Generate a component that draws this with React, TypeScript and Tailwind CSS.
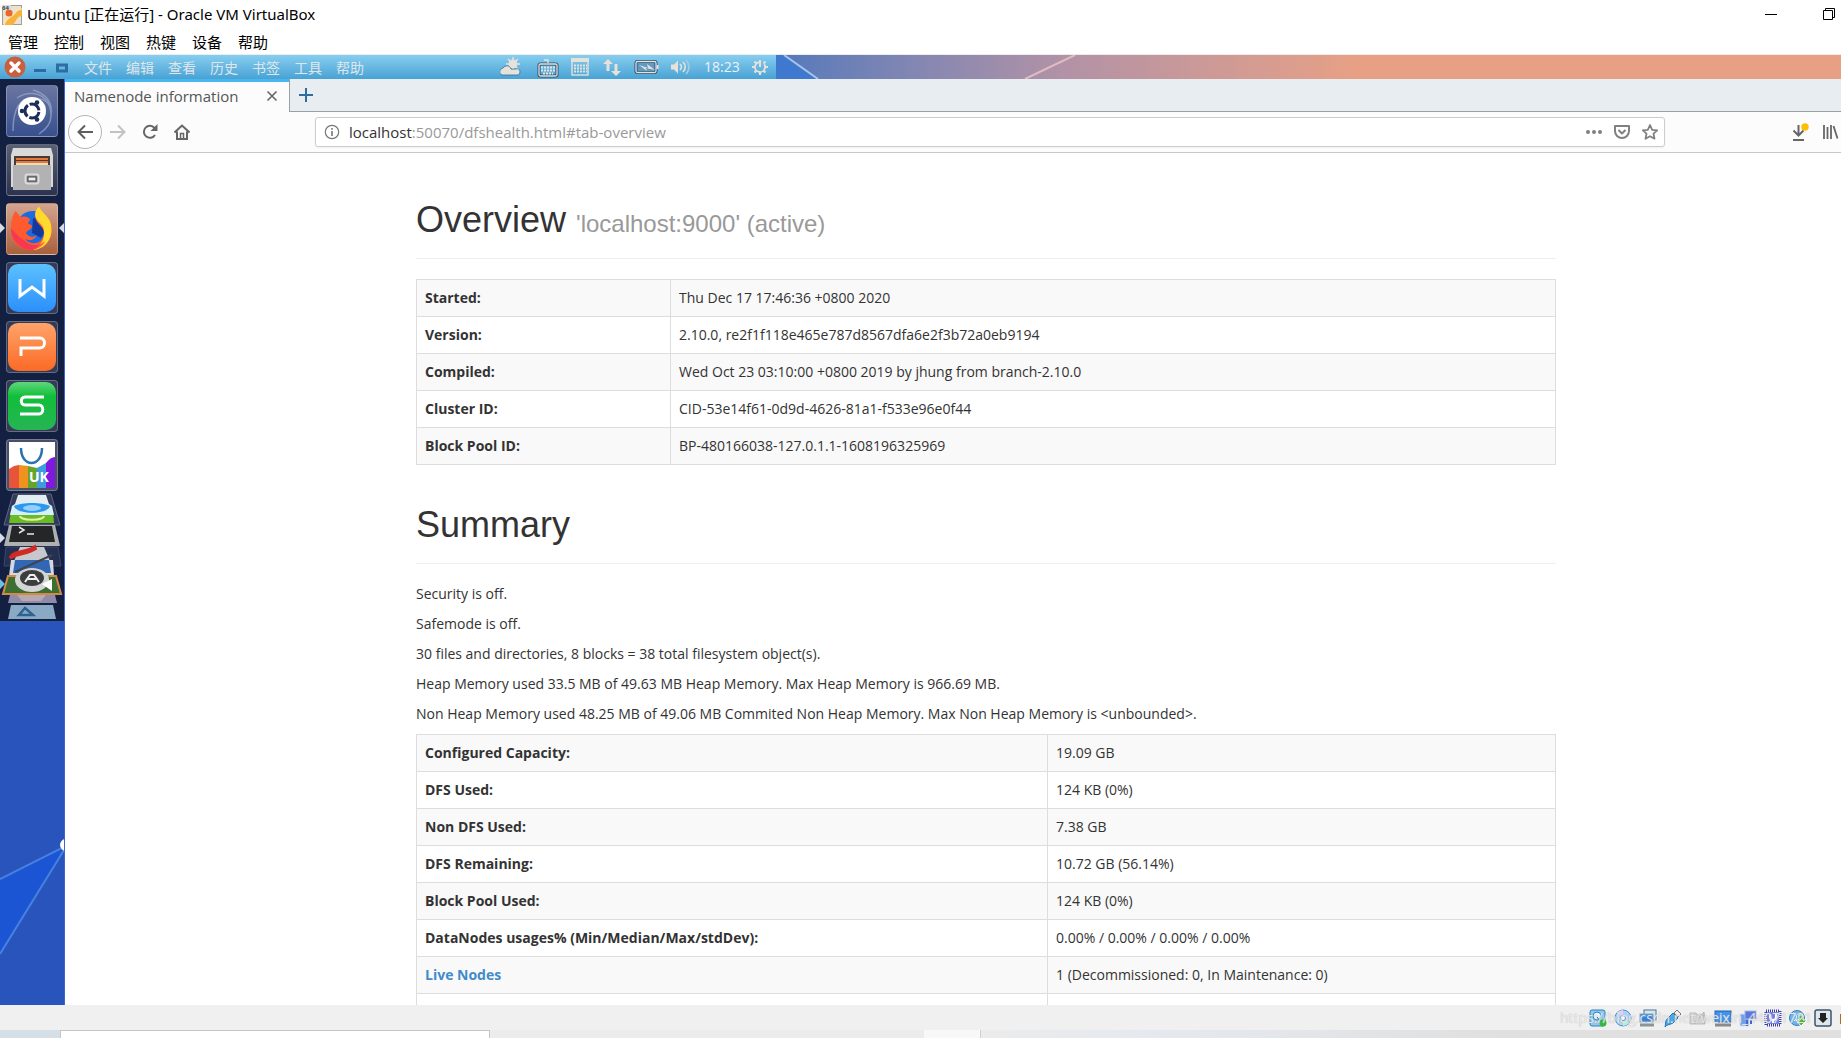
import React from "react";

const menuItems = ["管理", "控制", "视图", "热键", "设备", "帮助"];
const browserMenus = ["文件", "编辑", "查看", "历史", "书签", "工具", "帮助"];

const overviewRows = [
  { label: "Started:", value: "Thu Dec 17 17:46:36 +0800 2020" },
  { label: "Version:", value: "2.10.0, re2f1f118e465e787d8567dfa6e2f3b72a0eb9194" },
  { label: "Compiled:", value: "Wed Oct 23 03:10:00 +0800 2019 by jhung from branch-2.10.0" },
  { label: "Cluster ID:", value: "CID-53e14f61-0d9d-4626-81a1-f533e96e0f44" },
  { label: "Block Pool ID:", value: "BP-480166038-127.0.1.1-1608196325969" },
];

const summaryLines = [
  "Security is off.",
  "Safemode is off.",
  "30 files and directories, 8 blocks = 38 total filesystem object(s).",
  "Heap Memory used 33.5 MB of 49.63 MB Heap Memory. Max Heap Memory is 966.69 MB.",
  "Non Heap Memory used 48.25 MB of 49.06 MB Commited Non Heap Memory. Max Non Heap Memory is <unbounded>.",
];

const summaryRows = [
  { label: "Configured Capacity:", value: "19.09 GB" },
  { label: "DFS Used:", value: "124 KB (0%)" },
  { label: "Non DFS Used:", value: "7.38 GB" },
  { label: "DFS Remaining:", value: "10.72 GB (56.14%)" },
  { label: "Block Pool Used:", value: "124 KB (0%)" },
  { label: "DataNodes usages% (Min/Median/Max/stdDev):", value: "0.00% / 0.00% / 0.00% / 0.00%" },
  { label: "Live Nodes", value: "1 (Decommissioned: 0, In Maintenance: 0)", href: "#tab-datanode" },
  { label: "", value: "" },
];

const App = () => (
  <div className="h-screen flex flex-col overflow-hidden bg-white font-['Open_Sans','Noto_Sans_CJK_SC',sans-serif]">
    <TitleBar />
    <MenuBar />
    <div className="flex-1 min-h-0 flex flex-col border-t border-[#ececec]">
      <Panel />
      <div className="flex-1 min-h-0 flex">
        <Launcher />
        <Browser />
      </div>
    </div>
    <StatusBar />
    <Taskbar />
  </div>
);

const TitleBar = () => (
  <header className="h-[29px] shrink-0 flex items-center pl-[2px] text-[15px] text-black">
    <svg width="20" height="20" viewBox="0 0 20 20" className="mr-[5px]">
      <rect x="0.5" y="0.5" width="19" height="19" fill="#e9e2d3" stroke="#a79f8c" />
      <path d="M2 20C4 13 8 12 11 10c3-3 4-6 9-6v7c-4 0-5 3-7 6l-2 3z" fill="#f6b23c" />
      <path d="M2 20c2-7 6-8 9-10 3-3 4-6 9-6" fill="none" stroke="#fbe3a6" strokeWidth="1.5" />
      <circle cx="7" cy="8" r="3.5" fill="#e9662c" />
      <rect x="0" y="0" width="9" height="5" fill="#d9d9d9" />
      <text x="0" y="5" fontSize="6" fontWeight="700" fill="#444">64</text>
    </svg>
    <h1 className="font-['Noto_Sans','Noto_Sans_CJK_SC',sans-serif]">Ubuntu [正在运行] - Oracle VM VirtualBox</h1>
    <button type="button" aria-label="Minimize" className="ml-auto mr-[45px]">
      <svg width="13" height="13" viewBox="0 0 13 13"><path d="M0 6.5h12" stroke="#000" /></svg>
    </button>
    <button type="button" aria-label="Restore" className="mr-[5px]">
      <svg width="13" height="13" viewBox="0 0 13 13" fill="none" stroke="#000"><path d="M0.5 2.5h9v9h-9zM2.5 2.5v-2h9v9h-2" /></svg>
    </button>
  </header>
);

const MenuBar = () => (
  <nav className="h-[25px] shrink-0 flex items-center gap-4 pl-2 text-[15px] leading-5 text-black font-['Noto_Sans_CJK_SC',sans-serif]">
    {menuItems.map((item) => (
      <button key={item} type="button">{item}</button>
    ))}
  </nav>
);

// Unity top panel
const Panel = () => (
  <div className="h-6 shrink-0 flex">
    <div className="w-[776px] shrink-0 flex items-center bg-linear-to-b from-[#86cef0] to-[#48a2d4] text-[#dfe6ea]">
      <div className="flex items-center gap-3 pl-1">
        <button type="button" aria-label="Close window">
          <svg width="22" height="22" viewBox="0 0 22 22" className="block">
            <circle cx="11" cy="11" r="10.5" fill="#c8603f" />
            <path d="M7 7l8 8M15 7l-8 8" stroke="#fff" strokeWidth="3.4" strokeLinecap="round" />
          </svg>
        </button>
        <button type="button" aria-label="Minimize window" className="-ml-1">
          <svg width="12" height="12" viewBox="0 0 12 12"><path d="M0 9.500h12" stroke="#2c6ea4" strokeWidth="3" /></svg>
        </button>
        <button type="button" aria-label="Restore window" className="-ml-0.5">
          <svg width="12" height="12" viewBox="0 0 12 12"><path d="M1.500 4h9v6h-9z" fill="none" stroke="#2c6ea4" strokeWidth="3" /></svg>
        </button>
      </div>
      <nav className="flex gap-[14px] pl-4 text-sm font-['Noto_Sans_CJK_SC',sans-serif]">
        {browserMenus.map((item) => (
          <button key={item} type="button">{item}</button>
        ))}
      </nav>
      <div className="ml-auto flex items-center pr-2">
        <svg width="194" height="24" viewBox="500 55 194 24" fill="none" stroke="#e6e2da" strokeWidth="1.600" className="shrink-0">
          <g stroke="none" fill="#e6e2da">
            <circle cx="513" cy="64" r="4.500" />
            <path d="M513 57v14M506 64h14M508 59l10 10M518 59l-10 10" stroke="#e6e2da" strokeWidth="1.500" />
            <path d="M502 75c-3-1-3-6 1-7 2-3 7-3 8 1 3 1 8-2 9 2 0 3-1 4-3 4z" stroke="#2f6f9f" strokeWidth="0.800" />
          </g>
          <rect x="539" y="64" width="18" height="12" rx="1.500" stroke="#274e72" strokeWidth="3" />
          <rect x="539" y="64" width="18" height="12" rx="1.500" strokeWidth="1.300" />
          <path d="M541 67.500h14M541 70.500h14M543 73.500h10" strokeDasharray="2 1" strokeWidth="2" />
          <path d="M548 63v-3h-4" strokeWidth="1.300" />
          <rect x="572" y="61" width="16" height="14" strokeWidth="1.400" />
          <path d="M571 60h18" strokeWidth="4" />
          <path d="M574 65.500h13M574 68.500h13M574 71.500h13" strokeDasharray="2 1" strokeWidth="2" />
          <path d="M608 71V61M616 64v9" strokeWidth="3" />
          <path d="M603 64l5-5 5 5zM611 71l5 5 5-5z" fill="#e6e2da" stroke="none" />
          <rect x="636" y="61.500" width="20" height="11" rx="1.500" fill="#5f9bc4" stroke="#274e72" strokeWidth="3" />
          <rect x="636" y="61.500" width="20" height="11" rx="1.500" strokeWidth="1.300" />
          <path d="M657.500 65v4" strokeWidth="2" />
          <path d="M639 65l9 3-1-4 8 6-9-2 1 3z" fill="#e6e2da" stroke="none" />
          <path d="M671 64.500h3l4-4v13l-4-4h-3z" fill="#e6e2da" stroke="none" />
          <path d="M680 64c2 2 2 4 0 6M683 62c3 3 3 7 0 10" />
          <path d="M686 60c4 4 4 10 0 14" stroke="#a9c9dc" />
        </svg>
        <time className="text-sm text-[#eef2f4] w-12 ml-[10px]">18:23</time>
        <svg width="16" height="16" viewBox="0 0 16 16" fill="none" stroke="#e6e2da">
          <circle cx="8" cy="8" r="5" strokeWidth="1.800" strokeDasharray="25.400 6" strokeDashoffset="-10.900" transform="rotate(-160 8 8)" />
          <path d="M8 8V1" strokeWidth="2" />
          <path d="M13 8h3M0 8h3M8 13v3M11.500 11.500l2 2M4.500 11.500l-2 2M11.500 4.500l2-2M4.500 4.500l-2-2" strokeWidth="2.200" />
        </svg>
      </div>
    </div>
    <div className="flex-1 bg-linear-to-r from-[#5379bb] via-[#b292a6] via-27% to-[#e8a084] to-55%">
      <svg width="400" height="24" viewBox="0 0 400 24" fill="none" className="block">
        <path d="M0 0h8l34 24H0z" fill="#3f78cf" />
        <path d="M8 0l34 24" stroke="#a9c3ee" strokeWidth="2" />
        <path d="M249 24l50-24" stroke="#e0bcc0" strokeWidth="2" />
      </svg>
    </div>
  </div>
);

const Tile = ({ className, label, children }: { className: string; label: string; children?: React.ReactNode }) => (
  <button type="button" aria-label={label} className={`size-[52px] shrink-0 rounded border border-white/25 overflow-hidden ${className}`}>
    <svg width="50" height="50" viewBox="0 0 50 50" fill="none" className="block">{children}</svg>
  </button>
);

const Launcher = () => (
  <aside className="w-[65px] shrink-0 flex flex-col bg-[#2854bb] border-r border-[#3f66cc]">
    <div className="h-[542px] shrink-0 flex flex-col items-center gap-[7px] pt-[6px] bg-[#142042] relative">
      <Tile label="Dash" className="bg-linear-to-b from-[#6b76a0] to-[#38508f]">
        <path d="M6 45C6 25 12 12 26 12c14 0 18 6 18 18 0 8-6 14-12 18M26 4c14 4 20 12 18 26M10 12c8-6 24-8 32 6" stroke="#9aa8cf" strokeWidth="1.500" opacity="0.700" />
        <circle cx="25" cy="25" r="14" fill="#fff" />
        <circle cx="25" cy="25" r="7" stroke="#1c2c5c" strokeWidth="3" strokeDasharray="12.700 2" strokeDashoffset="-1" />
        <circle cx="15" cy="25" r="2.300" fill="#1c2c5c" />
        <circle cx="30" cy="16.500" r="2.300" fill="#1c2c5c" />
        <circle cx="30" cy="33.500" r="2.300" fill="#1c2c5c" />
      </Tile>
      <Tile label="Files" className="bg-linear-to-b from-[#5b6173] to-[#2b3350]">
        <path d="M6 3h38l2 7v32H4V10z" fill="#d9d9d9" />
        <path d="M7 11h36v10H7z" fill="#4a3a33" />
        <path d="M9 14h32M9 17h32" stroke="#e17a3c" strokeWidth="2" />
        <path d="M9 19h32" stroke="#f7d9b8" strokeWidth="2" />
        <path d="M6 20h38v25H6z" fill="#b2b2b2" />
        <rect x="18.500" y="29.500" width="13" height="9" rx="2" fill="#8f8f8f" stroke="#dcdcdc" strokeWidth="2" />
        <rect x="21" y="32" width="8" height="4" fill="#eee" stroke="#444" />
      </Tile>
      <Tile label="Firefox" className="bg-linear-to-b from-[#d3a590] to-[#a9603c]">
        <circle cx="26" cy="24" r="17" fill="#1a6be0" />
        <path d="M26 14a12 12 0 0 1 8 20l-9-5z" fill="#123a9c" />
        <path d="M8 7c3 2 4 4 5 6 4-1 7-1 10 2 0 2-2 3-2 5 2 0 5 1 4 3-1 3-5 3-6 6 2 4 7 5 11 2-3 6-8 6-12 4 8 8 18 4 19-6 0-6-6-8-8-13-2-5 0-9 3-14 1 7 7 9 11 15 4 8 2 17-4 23-9 8-23 8-31-1C1 29 4 15 8 7z" fill="#ff5a30" />
        <path d="M32 2c2 6 7 8 11 15 5 13-2 28-17 29 7-4 12-10 11-19 0-6-6-8-8-13-2-5 0-8 3-12z" fill="#ffd92e" />
        <path d="M4 24c0 13 10 22 21 22 6-1 11-4 13-9-6 6-15 5-20 0-5-3-9-7-14-13z" fill="#f5295e" opacity="0.700" />
      </Tile>
      <Tile label="WPS Writer" className="bg-[#343b56]">
        <rect x="1" y="1" width="48" height="48" rx="10" fill="url(#writer)" />
        <path d="M13 16v17l12-9 12 9V16" stroke="#fff" strokeWidth="3" />
        <defs><linearGradient id="writer" x2="0" y2="1"><stop stopColor="#5cc1ff" /><stop offset="1" stopColor="#2b8ffb" /></linearGradient></defs>
      </Tile>
      <Tile label="WPS Presentation" className="bg-[#343b56]">
        <rect x="1" y="1" width="48" height="48" rx="10" fill="url(#slides)" />
        <path d="M13 16h20c6 0 6 10 0 10H14v8" stroke="#fff" strokeWidth="3" />
        <defs><linearGradient id="slides" x2="0" y2="1"><stop stopColor="#ffa36b" /><stop offset="1" stopColor="#fb6a25" /></linearGradient></defs>
      </Tile>
      <Tile label="WPS Spreadsheets" className="bg-[#343b56]">
        <rect x="1" y="1" width="48" height="48" rx="10" fill="url(#sheets)" />
        <path d="M37 16H18c-5 0-5 8 0 8h14c5 0 5 9 0 9H13" stroke="#fff" strokeWidth="3" />
        <defs><linearGradient id="sheets" x2="0" y2="1"><stop stopColor="#5fd77b" /><stop offset="0.300" stopColor="#0fbf3a" /><stop offset="1" stopColor="#27b455" /></linearGradient></defs>
      </Tile>
      <Tile label="Ubuntu Kylin Software" className="bg-[#4a5069]">
        <path d="M2 2h46v46H2z" fill="#fff" />
        <path d="M2 29l5-3 5-1v23H2z" fill="#e8543a" />
        <path d="M12 25l9 1v22h-9z" fill="#f0931e" />
        <path d="M21 26l9 2v20h-9z" fill="#64a62c" />
        <path d="M30 28l9-5v25h-9z" fill="#3f9be0" />
        <path d="M39 23c3-4 6-6 9-6v31h-9z" fill="#8018e0" />
        <path d="M14 8c0 20 21 20 21 0" stroke="#2a72b0" strokeWidth="2.500" />
        <text x="22" y="42" fontSize="14" fontWeight="700" fill="#fff">UK</text>
      </Tile>
      <LauncherStack />
      <svg width="64" height="542" viewBox="0 0 64 542" className="absolute left-0 top-0 pointer-events-none">
        <path d="M0 144l5 5-5 5zM64 144l-5 5 5 5z" fill="#d9dbe2" />
        <path d="M0 454l5 5-5 5z" fill="#d9dbe2" />
        <path d="M0 500l5 5-5 5z" fill="#6cc0e8" />
      </svg>
    </div>
    <svg width="64" height="384" viewBox="0 0 64 384" fill="none" className="block shrink-0">
      <path d="M0 258l64-32v4L0 333z" fill="#1b55d3" />
      <path d="M0 258l64-32M0 333L64 229" stroke="#4581df" strokeWidth="2" />
      <circle cx="66" cy="224" r="6" fill="#fff" />
    </svg>
  </aside>
);

// Icons folded at the end of the launcher
const LauncherStack = () => (
  <svg width="64" height="128" viewBox="0 0 64 128" fill="none" className="block shrink-0 -mt-[5px]">
    <path d="M13 1h38l9 31H4z" fill="#323b59" stroke="#5d6580" />
    <path d="M18 2h28l6 18H12z" fill="#e3edf0" />
    <path d="M11 18h42l1 12H9z" fill="#68bd24" />
    <path d="M12 13c6-6 34-6 40 0l2 9H10z" fill="#d5f0ff" />
    <path d="M14 13c8-4 28-4 36 0-2 9-34 9-36 0z" fill="#2f96ea" />
    <ellipse cx="32" cy="15" rx="9" ry="3" fill="#8fd0ff" />
    <path d="M20 23c0 5 24 5 24 0" stroke="#e8efa0" strokeWidth="2" />
    <path d="M9 32h46l5 21H4z" fill="#aeb0b2" />
    <path d="M12 33h40l3 16H9z" fill="#242628" />
    <path d="M19 34l5 3-5 3M27 41h7" stroke="#e8e8e8" strokeWidth="1.500" />
    <path d="M6 54h52l3 19H4z" fill="#243052" stroke="#3d4766" />
    <path d="M20 54h24l6 14H14z" fill="#c5c9ce" />
    <path d="M11 67h42l1 16H9z" fill="#d5d9df" />
    <path d="M15 67h34l2 13H13z" fill="#3267b5" />
    <path d="M10 64c5-8 15-4 25-11l1 3c-9 6-15 4-25 9z" stroke="#d22a22" strokeWidth="2" fill="#d22a22" />
    <path d="M15 79L52 62" stroke="#42444b" strokeWidth="2" />
    <path d="M8 83h48l5 18H3z" fill="#3d6e32" stroke="#d48a45" strokeWidth="2" />
    <ellipse cx="32" cy="87" rx="17" ry="12" fill="#d4d6d5" />
    <ellipse cx="32" cy="85" rx="12" ry="8" fill="#3b3d3e" />
    <path d="M25 89l5-7h4l5 7M28 86h8" stroke="#eee" strokeWidth="2" />
    <path d="M42 91l10-5v12z" fill="#fff" />
    <path d="M10 102h45l2 8H8z" fill="#8f8ba8" />
    <path d="M17 102h29l-5 6H22z" fill="#b9a8ae" />
    <path d="M11 112h42l3 14H8z" fill="#8aa9c4" />
    <path d="M19 122l6-7 8 7z" stroke="#2d638f" strokeWidth="2.500" />
  </svg>
);

const Browser = () => (
  <div className="flex-1 min-w-0 flex flex-col bg-white">
    <div className="h-[33px] shrink-0 flex bg-[#e8edf1]">
      <div className="w-[225px] flex items-center border-t-3 border-t-[#45b8ee] border-r border-r-[#9b9fa3] bg-[#fcfcfc] pl-[9px] pr-[11px] pb-[3px]">
        <span className="text-[15px] leading-5 text-[#555]">Namenode information</span>
        <button type="button" aria-label="Close tab" className="ml-auto">
          <svg width="12" height="12" viewBox="0 0 12 12" className="block"><path d="M1.500 1.500l9 9M10.500 1.500l-9 9" stroke="#666" strokeWidth="1.600" /></svg>
        </button>
      </div>
      <div className="flex-1 flex items-center border-b border-[#9b9fa3] pl-[9px]">
        <button type="button" aria-label="New tab">
          <svg width="14" height="14" viewBox="0 0 14 14"><path d="M7 0v14M0 7h14" stroke="#2c6ea4" strokeWidth="2" /></svg>
        </button>
      </div>
    </div>
    <Toolbar />
    <Dashboard />
  </div>
);

const Toolbar = () => (
  <div className="h-[41px] shrink-0 flex items-center border-b border-[#c8c8c8] bg-[#fcfcfc] pl-[3px]">
    <button type="button" aria-label="Back" className="size-[34px] shrink-0 rounded-full border border-[#b5b5b5] bg-white flex items-center justify-center">
      <svg width="16" height="16" viewBox="0 0 16 16" fill="none" stroke="#5f5f5f" strokeWidth="2"><path d="M16 8H2M8 1.500L1.500 8 8 14.500" /></svg>
    </button>
    <button type="button" aria-label="Forward" className="ml-2 shrink-0">
      <svg width="16" height="16" viewBox="0 0 16 16" fill="none" stroke="#c2c2c2" strokeWidth="2"><path d="M0 8h14M8 1.500L14.500 8 8 14.500" /></svg>
    </button>
    <button type="button" aria-label="Reload" className="ml-4 shrink-0">
      <svg width="16" height="16" viewBox="0 0 16 16" fill="none" stroke="#666" strokeWidth="2"><path d="M13 11a6 6 0 1 1-.5-7" /><path d="M15.500 0v7h-7z" fill="#666" stroke="none" /></svg>
    </button>
    <button type="button" aria-label="Home" className="ml-4 shrink-0">
      <svg width="16" height="16" viewBox="0 0 16 16" fill="none" stroke="#666" strokeWidth="2"><path d="M0.500 8.500L8 1.500l7.500 7M3 7.500V15h10V7.500" /><path d="M6.500 15V9.500h3V15" strokeWidth="1.500" /></svg>
    </button>
    <div className="ml-[125px] flex-1 h-[30px] flex items-center rounded-[3px] border border-[#cdcdcd] bg-white pl-2 pr-[6px] shadow-xs">
      <svg width="16" height="16" viewBox="0 0 16 16" fill="none" stroke="#777" className="shrink-0"><circle cx="8" cy="8" r="6.700" strokeWidth="1.200" /><path d="M8 7v5M8 4v1.700" strokeWidth="1.600" /></svg>
      <div className="relative flex-1 ml-[9px] h-5 text-[15px] leading-5">
        <input aria-label="Address" defaultValue="localhost:50070/dfshealth.html#tab-overview" className="w-full h-5 text-transparent caret-black outline-none" />
        <span aria-hidden="true" className="absolute left-0 top-0 pointer-events-none text-[#999]"><span className="text-[#333]">localhost</span>:50070/dfshealth.html#tab-overview</span>
      </div>
      <div className="flex items-center gap-3">
        <button type="button" aria-label="Page actions">
          <svg width="16" height="16" viewBox="0 0 16 16" fill="#808080"><circle cx="2" cy="8" r="2" /><circle cx="8" cy="8" r="2" /><circle cx="14" cy="8" r="2" /></svg>
        </button>
        <button type="button" aria-label="Save to Pocket">
          <svg width="16" height="16" viewBox="0 0 16 16" fill="none" stroke="#808080" strokeWidth="2"><path d="M1 2h14v5a7 7 0 0 1-14 0zM4.500 6L8 9.500 11.500 6" strokeLinejoin="round" /></svg>
        </button>
        <button type="button" aria-label="Bookmark">
          <svg width="16" height="16" viewBox="0 0 16 16" fill="none" stroke="#808080" strokeWidth="1.800"><path d="M8 1l2.200 4.800 5 .5-3.700 3.400 1 5L8 12.200l-4.500 2.500 1-5L0.800 6.300l5-.5z" strokeLinejoin="round" /></svg>
        </button>
      </div>
    </div>
    <button type="button" aria-label="Downloads" className="ml-[127px] shrink-0">
      <svg width="17" height="18" viewBox="0 0 17 18" fill="none" stroke="#666" strokeWidth="2"><path d="M6.500 2v10M1.500 7.500l5 5 5-5M1 17h11" /><circle cx="13" cy="4" r="3.700" fill="#ffbf00" stroke="none" /></svg>
    </button>
    <button type="button" aria-label="Library" className="ml-[14px] mr-[2px] shrink-0">
      <svg width="16" height="16" viewBox="0 0 16 16" fill="none" stroke="#666" strokeWidth="1.800"><path d="M1 1v14M4.500 3v12M8 1v14M10.500 2l4 12.500" /></svg>
    </button>
  </div>
);

const Dashboard = () => (
  <main className="flex-1 min-h-0 overflow-hidden pt-[7px] pl-[66px] text-sm leading-5 text-[#333]">
    <div className="max-w-[1140px] mx-auto">
      <PageHeader title="Overview" note="'localhost:9000' (active)" />
      <InfoTable rows={overviewRows} labelWidth="w-[254px]" />
      <PageHeader title="Summary" />
      {summaryLines.map((line) => (
        <p key={line} className="mb-[10px]">{line}</p>
      ))}
      <InfoTable rows={summaryRows} labelWidth="w-[631px]" />
    </div>
  </main>
);

// Reusable Components
interface PageHeaderProps {
  title: string;
  note?: string;
}

const PageHeader: React.FC<PageHeaderProps> = ({ title, note }) => (
  <div className="pt-10 pb-[18px] mb-5 border-b border-[#eee] font-['Liberation_Sans',sans-serif]">
    <h2 className="text-4xl leading-10">
      {title} {note && <small className="text-2xl leading-none text-[#999]">{note}</small>}
    </h2>
  </div>
);

interface InfoTableProps {
  rows: { label: string; value: string; href?: string }[];
  labelWidth: string;
}

const InfoTable: React.FC<InfoTableProps> = ({ rows, labelWidth }) => (
  <table className="w-full border-collapse border border-[#ddd]">
    <tbody>
      {rows.map(({ label, value, href }) => (
        <tr key={label} className="h-[37px] odd:bg-[#f9f9f9]">
          <th scope="row" className={`${labelWidth} border border-[#ddd] p-2 text-left font-bold`}>
            {href ? <a href={href} className="text-[#428bca]">{label}</a> : label}
          </th>
          <td className="border border-[#ddd] p-2">{value}</td>
        </tr>
      ))}
    </tbody>
  </table>
);

const StatusBar = () => (
  <footer className="h-[25px] shrink-0 relative flex items-center justify-end bg-[#f0f0f0]">
    <div className="flex items-center gap-[7px]">
      <svg width="18" height="18" viewBox="0 0 18 18"><rect x="1" y="1" width="15" height="16" rx="2" fill="#8fc9ee" stroke="#2b83c0" /><circle cx="8" cy="7" r="4" fill="#e4f4ff" stroke="#2b83c0" /><path d="M8 8l4 5" stroke="#357" /><circle cx="14" cy="14" r="3.500" fill="#35b83a" /></svg>
      <svg width="18" height="18" viewBox="0 0 18 18"><circle cx="9" cy="9" r="8" fill="#a9d4f7" stroke="#4c8fd0" /><path d="M9 9L3 3.500A8 8 0 0 1 9 1z" fill="#e9c9f5" /><path d="M9 9l6 5a8 8 0 0 1-6 3z" fill="#bdf0d0" /><circle cx="9" cy="9" r="2.500" fill="#fff" stroke="#4c8fd0" /></svg>
      <svg width="18" height="18" viewBox="0 0 18 18"><rect x="5" y="1" width="12" height="10" fill="#d5e6f5" stroke="#55718c" /><rect x="1" y="5" width="13" height="8" fill="#3184dd" stroke="#8aa5bd" /><path d="M1 16h14" stroke="#8a9499" strokeWidth="3" /></svg>
      <svg width="18" height="18" viewBox="0 0 18 18"><path d="M13 1l4 4-3 3-4-4z" fill="#eee" stroke="#777" /><path d="M9 4l5 5-5 5c-3 2-6 1-8 4 1-4 0-7 3-9z" fill="#4aa6e6" stroke="#2374b0" /></svg>
      <svg width="18" height="18" viewBox="0 0 18 18"><path d="M1 4h6l1 2h8v9H1z" fill="#d3d3d3" stroke="#bbb" /><path d="M5 15L15 3v12" fill="none" stroke="#aaa" /></svg>
      <svg width="18" height="18" viewBox="0 0 18 18"><rect x="1" y="2" width="16" height="11" fill="#3f93ee" stroke="#2262ad" /><path d="M1 16h16" stroke="#8a8a8a" strokeWidth="3" /></svg>
      <svg width="18" height="18" viewBox="0 0 18 18"><rect x="1" y="5" width="9" height="12" fill="#6ea2e8" stroke="#d5e2f8" /><rect x="6" y="2" width="11" height="8" fill="#5a78d8" stroke="#a5b5ea" /><path d="M8 11v6M12 11v4" stroke="#4364cf" strokeWidth="2" /></svg>
      <svg width="18" height="18" viewBox="0 0 18 18"><rect x="2" y="2" width="14" height="14" fill="none" stroke="#3a3fae" strokeWidth="3" strokeDasharray="1 1" /><rect x="3" y="3" width="12" height="12" fill="#7580e2" /><path d="M6 5v3a3 3 0 0 0 6 0V5M9 11v3" stroke="#fff" strokeWidth="2" fill="none" /></svg>
      <svg width="18" height="18" viewBox="0 0 18 18"><circle cx="8" cy="9" r="7.500" fill="#6cb4ec" stroke="#367fbe" /><path d="M4 4c4 1 5 5 1 8" stroke="#fff" fill="none" /><path d="M10 6h4v5h4l-6 6-5-6h3z" fill="#4fb338" stroke="#fff" /></svg>
      <svg width="18" height="18" viewBox="0 0 18 18"><rect x="1" y="1" width="16" height="16" rx="2" fill="#dfe7ee" stroke="#3d5468" strokeWidth="1.500" /><path d="M6 4h6v5h2l-5 5-5-5h2z" fill="#222" /></svg>
      <span className="w-[2px] overflow-hidden whitespace-nowrap text-[15px] leading-5 text-black">Right Ctrl</span>
    </div>
    <span className="absolute left-[calc(100%-281px)] top-[3px] whitespace-nowrap text-sm leading-5 text-white/70 [text-shadow:0_0_1px_#aaa]">https://blog.csdn.net/weixin_44071721</span>
  </footer>
);

const Taskbar = () => (
  <div className="h-2 shrink-0 flex bg-[#e9e9ea]">
    <div className="w-[60px] bg-[#d5dfe8]" />
    <div className="w-[430px] border border-b-0 border-[#c6c6c6] bg-white" />
    <div className="w-[434px] bg-[#ececec]" />
    <div className="w-[57px] border-r border-[#d0d0d0] bg-[#f8f8f8]" />
    <div className="flex-1 bg-linear-to-r from-[#ebebeb] via-[#e5e9ef] via-20% to-[#e0e0e0] to-60%" />
  </div>
);

export default App;
